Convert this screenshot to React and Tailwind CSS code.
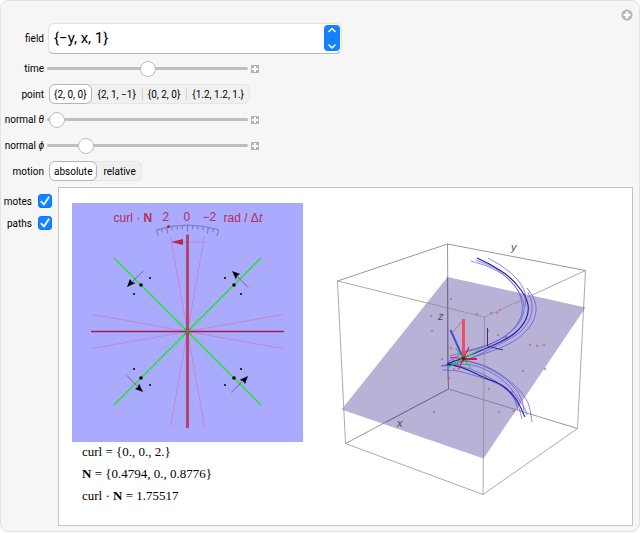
import React, { useState } from 'react';

const POINTS = ['{2, 0, 0}', '{2, 1, −1}', '{0, 2, 0}', '{1.2, 1.2, 1.}'];
const MOTIONS = ['absolute', 'relative'];
const FIELDS = ['{−y, x, 1}', '{y, −x, 1}', '{x, y, z}'];

const TICKS = [-6, -5, -4, -3, -2, -1, 0, 1, 2, 3, 4, 5, 6];

// [x, y] positions of the motes lying on the plane
const MOTES = [
  [451, 299], [431, 316], [432, 331], [477, 314], [451, 348], [442, 359],
  [491, 313], [497, 313], [500, 310], [498, 335], [506, 337], [488, 331],
  [530, 345], [537, 346], [544, 345], [545, 369], [434, 412], [499, 412],
  [514, 411], [512, 392], [489, 389], [523, 371], [449, 378], [454, 369], [485, 377],
];

const MAIN_PATHS = [
  [[477, 258], [491, 265], [508, 276], [521, 290], [528, 305], [526, 319], [515, 333], [498, 343], [480, 351], [463, 358], [447, 364]],
  [[447, 364], [463, 368], [483, 377], [503, 386], [516, 399], [525, 417]],
];

const SIDE_PATHS = [
  [[471, 261], [489, 267], [505, 276], [517, 289], [522, 304], [520, 319], [508, 334], [490, 344], [470, 350], [450, 356]],
  [[476, 260], [496, 269], [510, 281], [520, 294], [524, 308], [519, 323], [505, 336], [484, 347], [463, 353], [448, 362]],
  [[488, 258], [503, 267], [517, 279], [525, 293], [525, 307]],
  [[527, 288], [534, 299], [536, 311], [531, 325], [517, 339], [500, 348], [480, 355], [462, 361], [441, 366]],
  [[528, 292], [532, 304], [530, 318], [520, 332], [502, 343], [482, 353], [462, 362], [443, 366]],
  [[441, 366], [458, 366], [478, 372], [500, 384], [513, 397], [518, 410]],
  [[442, 370], [457, 371], [476, 376], [496, 383], [510, 393], [518, 405], [522, 419]],
  [[451, 360], [475, 363], [497, 373], [511, 384], [521, 398], [524, 411]],
  [[463, 360], [485, 366], [503, 376], [518, 389], [528, 403], [532, 422]],
  [[448, 365], [472, 365], [492, 373], [507, 384], [517, 397], [525, 409], [527, 415]],
];

// Catmull-Rom spline through the points, written as cubic segments
const smooth = (pts) =>
  pts.slice(1).reduce((d, p, i) => {
    const a = pts[i - 1] || pts[i];
    const b = pts[i];
    const c = pts[i + 2] || p;
    return `${d}C${b[0] + (p[0] - a[0]) / 6} ${b[1] + (p[1] - a[1]) / 6} ${p[0] - (c[0] - b[0]) / 6} ${p[1] - (c[1] - b[1]) / 6} ${p[0]} ${p[1]}`;
  }, `M${pts[0][0]} ${pts[0][1]}`);

const Row = ({ id, label, children }) => (
  <>
    <label htmlFor={id} className="justify-self-end whitespace-nowrap">
      {label}
    </label>
    <div className="flex min-w-0 items-center">{children}</div>
  </>
);

const SliderRow = ({ id, label, initial }) => {
  const [value, setValue] = useState(initial);
  return (
    <Row id={id} label={label}>
      <input
        id={id}
        type="range"
        min="0"
        max="100"
        value={value}
        onChange={(e) => setValue(e.target.value)}
        className="h-4 w-[201px] appearance-none bg-transparent [&::-webkit-slider-runnable-track]:h-[3px] [&::-webkit-slider-runnable-track]:rounded-full [&::-webkit-slider-runnable-track]:bg-[#bfbfbf] [&::-webkit-slider-thumb]:-mt-[6px] [&::-webkit-slider-thumb]:size-4 [&::-webkit-slider-thumb]:appearance-none [&::-webkit-slider-thumb]:rounded-full [&::-webkit-slider-thumb]:border [&::-webkit-slider-thumb]:border-[#bdbdbd] [&::-webkit-slider-thumb]:bg-white"
      />
      <button type="button" aria-label="Show slider controls" className="ml-[3px] mt-px">
        <svg viewBox="0 0 8 8" className="size-2">
          <path fill="#b3b3b3" d="M0 0h8v8H0z" />
          <path stroke="#fff" strokeWidth="2" d="M4 1v6M1 4h6" />
        </svg>
      </button>
    </Row>
  );
};

const SetterBar = ({ id, options }) => {
  const [selected, setSelected] = useState(options[0]);
  return (
    <div id={id} role="group" className="ml-[2px] flex h-5 rounded-md bg-[#f0f0f0] ring-1 ring-inset ring-[#e6e6e6]">
      {options.map((option, i) => (
        <button
          key={option}
          type="button"
          aria-pressed={option === selected}
          onClick={() => setSelected(option)}
          className={
            option === selected
              ? 'whitespace-nowrap rounded-md border border-[#b5b5b5] bg-white px-1'
              : i > 1
                ? 'relative whitespace-nowrap px-[6px] before:absolute before:left-0 before:top-1 before:h-3 before:w-px before:bg-[#d4d4d4]'
                : 'whitespace-nowrap px-[6px]'
          }
        >
          {option}
        </button>
      ))}
    </div>
  );
};

const Check = ({ label }) => (
  <label className="flex h-[22px] items-center justify-end gap-[6px]">
    {label}
    <span className="relative size-[14px]">
      <input
        type="checkbox"
        defaultChecked
        className="peer block size-[14px] appearance-none rounded-[3px] border border-[#b5b5b5] bg-white checked:border-[#0a7aff] checked:bg-[#1483ff]"
      />
      <svg viewBox="0 0 14 14" className="pointer-events-none absolute inset-0 hidden size-[14px] peer-checked:block">
        <path d="M3.3 7.6 5.9 10.5 10.8 3.3" fill="none" stroke="#fff" strokeWidth="1.8" strokeLinecap="round" strokeLinejoin="round" />
      </svg>
    </span>
  </label>
);

const Paddle = ({ angle }) => (
  <g transform={`rotate(${angle})`}>
    <path d="M0 0-60-85M0 0-85-60" stroke="#8fb6d2" strokeWidth="0.9" />
    <path d="M0 0-73.5-73.5" stroke="#19ea19" strokeWidth="1.3" />
    <path d="M-44-60.5-55-50" stroke="#6a67aa" strokeWidth="1" />
    <path d="M-60.5-44.5-57.5-52.5-55.5-49.5-52-48.5z" fill="#000" />
    <circle cx="-46.5" cy="-46.5" r="1.8" />
    <circle cx="-37.5" cy="-53.5" r="1" />
    <circle cx="-53.5" cy="-37.5" r="1" />
  </g>
);

const CurlMeter = () => (
  <svg viewBox="-115.5 -128.5 231 239" className="block h-[239px] w-[231px] bg-[#aaaaff]">
    <g fill="#ae2f56" fontSize="12" fontFamily="'Liberation Sans', Arial, sans-serif">
      <text x="-74" y="-110">
        curl · <tspan fontWeight="bold">N</tspan>
      </text>
      <text x="-25" y="-111">2</text>
      <text x="-4" y="-111">0</text>
      <text x="15" y="-111">−2</text>
      <text x="36" y="-110">
        rad / Δ<tspan fontStyle="italic">t</tspan>
      </text>
    </g>
    <g fill="none" stroke="#7775b4" strokeWidth="1">
      <path d="M-31.3-101.6A106.3 106.3 0 0 1 31.3-101.6" />
      {TICKS.map((k) => (
        <path key={k} d={k % 2 === 0 && k !== 2 && k !== -2 ? 'M0-106V-100' : 'M0-106V-102.5'} transform={`rotate(${k * 2.85})`} />
      ))}
    </g>
    <circle cx="-19" cy="-105" r="1.5" fill="#c01838" />
    <path
      d="M-17-95 17 95M17-95-17 95M-95-17 95 17M-95 17 95-17M-8-89.5H17"
      stroke="#c983c6"
      strokeWidth="0.9"
    />
    <path d="M-16.5-89.5-4.5-92.5V-86.5z" fill="#b52a4a" />
    {[0, 90, 180, 270].map((angle) => (
      <Paddle key={angle} angle={angle} />
    ))}
    <path d="M-96.5 0H96.5" stroke="#a01f4c" strokeWidth="1.5" />
    <path d="M0-97V96.5" stroke="#b04570" strokeWidth="3" />
    <path d="M-3 3 3-3M-3-3 3 3" stroke="#3c8f3c" strokeWidth="1" />
  </svg>
);

const FlowView = () => (
  <svg viewBox="334 240 256 258" className="block h-[258px] w-[256px]" fill="none">
    <path d="M337.5 281 447.5 244 585.5 270.5M447.5 244 448.5 389M345.5 443.5 448.5 389 577.5 428.5" stroke="#8c8c8c" strokeWidth="0.9" />
    <path d="M447.5 277 585.5 307.5 483.5 458.5 341.5 409.5z" fill="#7365af" fillOpacity="0.5" />
    <path d="M447.5 277V361L448.5 389 386 422" stroke="#6e6889" strokeWidth="0.9" />
    <g stroke="#c85a7c" strokeWidth="0.8">
      {MOTES.map(([x, y]) => (
        <path key={`${x}-${y}`} d={`M${x - 1.2} ${y}h2.4M${x} ${y - 1.2}v2.4`} />
      ))}
    </g>
    <g stroke="#5550dc" strokeWidth="0.7">
      {SIDE_PATHS.map((pts, i) => (
        <path key={i} d={smooth(pts)} />
      ))}
    </g>
    <g stroke="#1f16ac" strokeWidth="1.1">
      {MAIN_PATHS.map((pts, i) => (
        <path key={i} d={smooth(pts)} />
      ))}
    </g>
    <path d="M487.5 328V346L503 350" stroke="#3b2f80" strokeWidth="1" />
    <path d="M463 320 453 332" stroke="#d45a70" strokeWidth="0.8" />
    <path d="M463.5 359V319" stroke="#f04e60" strokeWidth="3" />
    <path d="M463 358 450.5 330" stroke="#5548dc" strokeWidth="2" />
    <path d="M455.5 348 471 368.5M448 367.5 479 350" stroke="#1fd32a" strokeWidth="1.2" />
    <path d="M450 357.5 477 359M469 347 458.5 369.5" stroke="#e8192c" strokeWidth="1.1" />
    <path d="M464 359H477" stroke="#d81c3c" strokeWidth="2" />
    <circle cx="463.5" cy="358.5" r="2" fill="#2b3b22" />
    <path d="M337.5 281 484.5 317 585.5 270.5 577.5 428.5 483 494.5 345.5 443.5zM484.5 317 483 494.5" stroke="#8a8a8a" strokeOpacity="0.8" strokeWidth="0.9" />
    <g fill="#505050" fontSize="11" fontStyle="italic" fontFamily="'Liberation Sans', Arial, sans-serif">
      <text x="511" y="251">y</text>
      <text x="438" y="320">z</text>
      <text x="397" y="427">x</text>
    </g>
  </svg>
);

export default function App() {
  return (
    <main className="w-full rounded-lg border border-[#e3e3e3] bg-[#f6f6f6] pb-[5px] pr-[6px] pt-2 font-[Roboto,sans-serif] text-[10px] text-black">
      <div className="flex h-[14px] items-start justify-end">
        <button type="button" aria-label="Options">
          <svg viewBox="0 0 12 12" className="size-3">
            <circle cx="6" cy="6" r="5.6" fill="#b5b5b5" />
            <path d="M6 2.6V9.4M2.6 6H9.4" stroke="#fff" strokeWidth="2.6" />
          </svg>
        </button>
      </div>

      <div className="grid grid-cols-[43px_1fr] grid-rows-[31px_28px_24px_26px_26px_26px] items-center gap-x-[3px]">
        <Row id="field" label="field">
          <div className="relative ml-px w-[294px] max-w-full">
            <select id="field" className="h-[31px] w-full appearance-none rounded-md border border-[#e2e2e2] border-b-[#b9b9b9] bg-white pl-[5px] text-[15px]">
              {FIELDS.map((field) => (
                <option key={field}>{field}</option>
              ))}
            </select>
            <svg viewBox="0 0 16 26" className="pointer-events-none absolute right-[2px] top-[2px] h-[26px] w-4" fill="none">
              <rect width="16" height="26" rx="4" fill="#1482ff" />
              <path d="M5 6.5 8 3.5 11 6.5M5 20 8 23 11 20" stroke="#fff" strokeWidth="1.5" strokeLinecap="round" strokeLinejoin="round" />
            </svg>
          </div>
        </Row>
        <SliderRow id="time" label="time" initial={50} />
        <Row id="point" label="point">
          <SetterBar id="point" options={POINTS} />
        </Row>
        <SliderRow id="theta" label={<>normal <i>θ</i></>} initial={1} />
        <SliderRow id="phi" label={<>normal <i>ϕ</i></>} initial={17} />
        <Row id="motion" label="motion">
          <SetterBar id="motion" options={MOTIONS} />
        </Row>
      </div>

      <div className="mt-[3px] grid grid-cols-[51px_1fr] gap-x-[6px]">
        <div className="pt-[3px]">
          <Check label="motes" />
          <Check label="paths" />
        </div>
        <section className="flex items-start justify-between border border-[#c3c3c3] bg-white pb-[18px] pl-[13px] pr-[42px] pt-[15px]">
          <div>
            <CurlMeter />
            <div className="-mt-px pl-[10px] font-['Liberation_Serif',serif] text-[13px] leading-[22px]">
              <p>curl = {'{0., 0., 2.}'}</p>
              <p>
                <b>N</b> = {'{0.4794, 0., 0.8776}'}
              </p>
              <p>
                curl · <b>N</b> = 1.75517
              </p>
            </div>
          </div>
          <div className="pt-[37px]">
            <FlowView />
          </div>
        </section>
      </div>
    </main>
  );
}
